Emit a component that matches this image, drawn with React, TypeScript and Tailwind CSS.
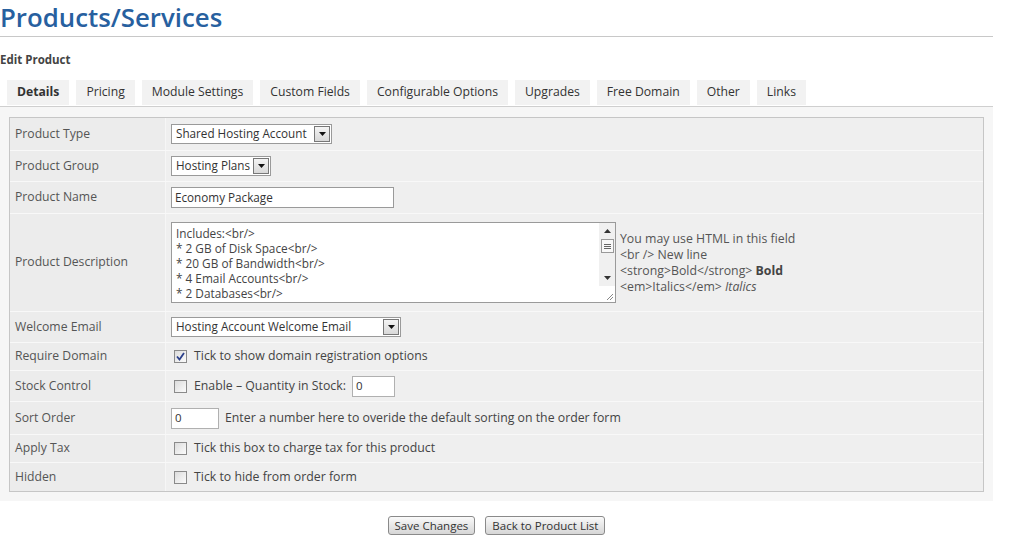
import React from "react";

const font = { fontFamily: '"Open Sans", "Noto Sans", Arial, sans-serif' };

function Select({ value, width }: { value: string; width: string }) {
  return (
    <div className={`flex h-[20px] items-center border border-[#9a9a9a] bg-white ${width}`}>
      <span className="flex-1 truncate pl-[4px] text-[11.7px] text-[#333]">{value}</span>
      <span className="mr-[1px] flex h-[16px] w-[16px] items-center justify-center border border-[#777] bg-gradient-to-b from-[#f4f4f4] to-[#d8d8d8]">
        <svg width="7" height="4" viewBox="0 0 7 4">
          <path d="M0 0 H7 L3.5 4 Z" fill="#111" />
        </svg>
      </span>
    </div>
  );
}

function Check({ checked }: { checked?: boolean }) {
  return (
    <span className="flex h-[13px] w-[13px] shrink-0 items-center justify-center border border-[#8a8a8a] bg-gradient-to-br from-[#dcdcdc] to-[#fbfbfb]">
      {checked && (
        <svg width="9" height="9" viewBox="0 0 9 9">
          <path d="M1 4.5 L3.5 7.5 L8 1" stroke="#2a3f8a" strokeWidth="1.8" fill="none" />
        </svg>
      )}
    </span>
  );
}

function Row({ label, h, children, last }: { label: string; h: string; children: React.ReactNode; last?: boolean }) {
  return (
    <div className={`flex ${h} ${last ? "" : "border-b border-[#f8f8f8]"}`}>
      <div className="flex w-[156px] shrink-0 items-center border-r border-[#f6f6f6] bg-[#ececec] pl-[5px] text-[12.2px] text-[#555]">
        {label}
      </div>
      <div className="flex flex-1 items-center bg-[#efefef] pl-[5px] text-[12.3px] text-[#444]">{children}</div>
    </div>
  );
}

const tabs = [
  "Details",
  "Pricing",
  "Module Settings",
  "Custom Fields",
  "Configurable Options",
  "Upgrades",
  "Free Domain",
  "Other",
  "Links",
];

export default function App() {
  return (
    <div className="h-[545px] w-[1012px] overflow-hidden bg-white" style={font}>
      <div className="w-[993px]">
        <h1 className="h-[36px] text-[25.8px] leading-[35px] font-semibold text-[#27609f]">Products/Services</h1>
        <div className="h-[1px] bg-[#c8c8c8]" />
        <div className="pt-[15px] text-[11.5px] leading-[16px] font-bold text-[#444]">Edit Product</div>
        <div className="mt-[12px] flex gap-[7px] pl-[7px]">
          {tabs.map((t, i) => (
            <div
              key={t}
              className={`flex h-[25px] items-center bg-[#f2f2f2] px-[10px] text-[12.2px] text-[#333] ${i === 0 ? "font-bold" : ""}`}
            >
              {t}
            </div>
          ))}
        </div>
        <div className="mt-[1px] border-t border-[#cfcfcf] bg-[#f6f6f6] pt-[10px] pb-[9px]">
          <div className="ml-[9px] w-[975px] border border-[#c6c6c6]">
            <Row label="Product Type" h="h-[33px]">
              <Select value="Shared Hosting Account" width="w-[161px]" />
            </Row>
            <Row label="Product Group" h="h-[31px]">
              <Select value="Hosting Plans" width="w-[100px]" />
            </Row>
            <Row label="Product Name" h="h-[32px]">
              <div className="flex h-[21px] w-[223px] items-center border border-[#9a9a9a] bg-white pl-[3px] text-[11.7px] text-[#333]">
                Economy Package
              </div>
            </Row>
            <Row label="Product Description" h="h-[98px]">
              <div className="flex h-[81px] w-[445px] border border-[#9a9a9a] bg-white">
                <div className="flex-1 pt-[3px] pl-[4px] text-[11.8px] leading-[15px] text-[#444]">
                  <div>Includes:&lt;br/&gt;</div>
                  <div>* 2 GB of Disk Space&lt;br/&gt;</div>
                  <div>* 20 GB of Bandwidth&lt;br/&gt;</div>
                  <div>* 4 Email Accounts&lt;br/&gt;</div>
                  <div>* 2 Databases&lt;br/&gt;</div>
                </div>
                <div className="flex w-[16px] flex-col bg-[#f0f0f0]">
                  <div className="flex h-[16px] items-center justify-center">
                    <svg width="7" height="4" viewBox="0 0 7 4"><path d="M0 4 H7 L3.5 0 Z" fill="#333" /></svg>
                  </div>
                  <div className="mx-auto flex h-[14px] w-[13px] flex-col items-center justify-center gap-[1px] border border-[#999] bg-[#f8f8f8]">
                    <span className="h-[1px] w-[7px] bg-[#666]" />
                    <span className="h-[1px] w-[7px] bg-[#666]" />
                    <span className="h-[1px] w-[7px] bg-[#666]" />
                  </div>
                  <div className="flex-1" />
                  <div className="flex h-[16px] items-center justify-center">
                    <svg width="7" height="4" viewBox="0 0 7 4"><path d="M0 0 H7 L3.5 4 Z" fill="#333" /></svg>
                  </div>
                  <div className="flex h-[16px] items-end justify-end bg-white pr-[1px] pb-[1px]">
                    <svg width="8" height="8" viewBox="0 0 8 8"><path d="M7 1 L1 7 M7 4 L4 7" stroke="#888" strokeWidth="1" /></svg>
                  </div>
                </div>
              </div>
              <div className="ml-[4px] text-[12.3px] leading-[16px] text-[#555]">
                <div>You may use HTML in this field</div>
                <div>&lt;br /&gt; New line</div>
                <div>
                  &lt;strong&gt;Bold&lt;/strong&gt; <b className="text-[#444]">Bold</b>
                </div>
                <div>
                  &lt;em&gt;Italics&lt;/em&gt; <i>Italics</i>
                </div>
              </div>
            </Row>
            <Row label="Welcome Email" h="h-[31px]">
              <Select value="Hosting Account Welcome Email" width="w-[230px]" />
            </Row>
            <Row label="Require Domain" h="h-[28px]">
              <span className="ml-[3px] flex items-center gap-[7px]">
                <Check checked />
                <span>Tick to show domain registration options</span>
              </span>
            </Row>
            <Row label="Stock Control" h="h-[31px]">
              <span className="ml-[3px] flex items-center gap-[7px]">
                <Check />
                <span>Enable – Quantity in Stock:</span>
              </span>
              <div className="ml-[6px] flex h-[21px] w-[43px] items-center border border-[#b0b0b0] bg-white pl-[3px] text-[11.5px] text-[#333]">
                0
              </div>
            </Row>
            <Row label="Sort Order" h="h-[33px]">
              <div className="flex h-[21px] w-[48px] items-center border border-[#b0b0b0] bg-white pl-[3px] text-[11.5px] text-[#333]">
                0
              </div>
              <span className="ml-[6px]">Enter a number here to overide the default sorting on the order form</span>
            </Row>
            <Row label="Apply Tax" h="h-[28px]">
              <span className="ml-[3px] flex items-center gap-[7px]">
                <Check />
                <span>Tick this box to charge tax for this product</span>
              </span>
            </Row>
            <Row label="Hidden" h="h-[28px]" last>
              <span className="ml-[3px] flex items-center gap-[7px]">
                <Check />
                <span>Tick to hide from order form</span>
              </span>
            </Row>
          </div>
        </div>
      </div>
      <div className="mt-[15px] flex w-[993px] justify-center gap-[10px]">
        <button className="h-[19px] rounded-[3px] border border-[#8a8a8a] bg-gradient-to-b from-[#fafafa] to-[#d6d6d6] px-[6px] text-[11.5px] leading-[16px] text-[#333]">
          Save Changes
        </button>
        <button className="h-[19px] rounded-[3px] border border-[#8a8a8a] bg-gradient-to-b from-[#fafafa] to-[#d6d6d6] px-[6px] text-[11.5px] leading-[16px] text-[#333]">
          Back to Product List
        </button>
      </div>
    </div>
  );
}
